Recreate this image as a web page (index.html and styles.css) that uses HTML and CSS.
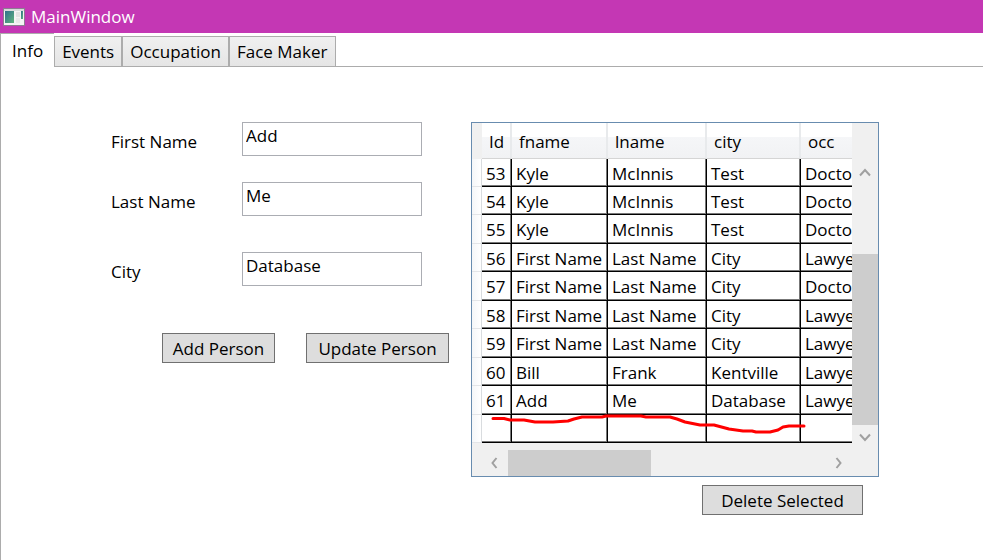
FILE: index.html
```
<!DOCTYPE html>
<html lang="en">
<head>
    <meta charset="UTF-8">
    <meta name="viewport" content="width=device-width, initial-scale=1.0">
    <title>MainWindow</title>
    <link rel="stylesheet" href="styles.css">
</head>
<body>
    <header class="titlebar">
        <svg class="app-icon" width="22" height="18" viewBox="0 0 22 18">
            <defs>
                <linearGradient id="pane" x1="0" y1="0" x2="1" y2="1">
                    <stop offset="0" stop-color="#2f6f8e"/>
                    <stop offset="1" stop-color="#5fb57c"/>
                </linearGradient>
            </defs>
            <rect x="0.5" y="0.5" width="21" height="17" fill="#f4f4f4" stroke="#8d7c93"/>
            <rect x="1" y="1" width="20" height="2" fill="#d8dadb"/>
            <rect x="2" y="3" width="9" height="12" fill="url(#pane)"/>
            <rect x="13" y="4" width="4" height="5" fill="#e2e2e2"/>
            <rect x="13" y="10" width="4" height="5" fill="#e9e9e9"/>
            <rect x="18" y="3" width="2" height="8" fill="url(#pane)"/>
        </svg>
        <span>MainWindow</span>
    </header>

    <nav class="tabs" role="tablist">
        <button class="tab active" role="tab" aria-selected="true">Info</button>
        <button class="tab" role="tab">Events</button>
        <button class="tab" role="tab">Occupation</button>
        <button class="tab" role="tab">Face Maker</button>
    </nav>

    <main class="page">
        <form class="person-form">
            <div class="field">
                <label for="fname">First Name</label>
                <input id="fname" type="text" value="Add">
            </div>
            <div class="field">
                <label for="lname">Last Name</label>
                <input id="lname" type="text" value="Me">
            </div>
            <div class="field field-city">
                <label for="city">City</label>
                <input id="city" type="text" value="Database">
            </div>
            <div class="form-buttons">
                <button type="button" class="btn btn-add">Add Person</button>
                <button type="button" class="btn btn-update">Update Person</button>
            </div>
        </form>

        <section class="people">
            <div class="grid">
                <div class="grid-rows">
                    <table>
                        <colgroup>
                            <col class="col-head">
                            <col class="col-id">
                            <col class="col-fname">
                            <col class="col-lname">
                            <col class="col-city">
                            <col>
                        </colgroup>
                        <thead>
                            <tr><td class="corner"></td><th>Id</th><th>fname</th><th>lname</th><th>city</th><th>occ</th></tr>
                        </thead>
                        <tbody>
                            <tr><td class="row-head"></td><td>53</td><td>Kyle</td><td>McInnis</td><td>Test</td><td>Doctor</td></tr>
                            <tr><td class="row-head"></td><td>54</td><td>Kyle</td><td>McInnis</td><td>Test</td><td>Doctor</td></tr>
                            <tr><td class="row-head"></td><td>55</td><td>Kyle</td><td>McInnis</td><td>Test</td><td>Doctor</td></tr>
                            <tr><td class="row-head"></td><td>56</td><td>First Name</td><td>Last Name</td><td>City</td><td>Lawyer</td></tr>
                            <tr><td class="row-head"></td><td>57</td><td>First Name</td><td>Last Name</td><td>City</td><td>Doctor</td></tr>
                            <tr><td class="row-head"></td><td>58</td><td>First Name</td><td>Last Name</td><td>City</td><td>Lawyer</td></tr>
                            <tr><td class="row-head"></td><td>59</td><td>First Name</td><td>Last Name</td><td>City</td><td>Lawyer</td></tr>
                            <tr><td class="row-head"></td><td>60</td><td>Bill</td><td>Frank</td><td>Kentville</td><td>Lawyer</td></tr>
                            <tr><td class="row-head"></td><td>61</td><td>Add</td><td>Me</td><td>Database</td><td>Lawyer</td></tr>
                            <tr><td class="row-head"></td><td></td><td></td><td></td><td></td><td></td></tr>
                        </tbody>
                    </table>
                </div>
                <div class="scroll-y">
                    <svg width="12" height="10" viewBox="0 0 12 10"><path d="M1 8.5 6 3l5 5.5"/></svg>
                    <div class="thumb-y"></div>
                    <svg width="12" height="10" viewBox="0 0 12 10"><path d="M1 1.5 6 7l5-5.5"/></svg>
                </div>
                <div class="scroll-x">
                    <svg width="8" height="12" viewBox="0 0 8 12"><path d="M6.5 1 2.5 6l4 5"/></svg>
                    <div class="track-x"><div class="thumb-x"></div></div>
                    <svg width="8" height="12" viewBox="0 0 8 12"><path d="M1.5 1l4 5-4 5"/></svg>
                </div>
                <!-- red pen line under the new row -->
                <svg class="pen" width="320" height="24" viewBox="0 0 320 24">
                    <path d="M3 4.500h11l6 1.500h14l11 2h18l15-1 6-2 8-2h20l4-1h35l5 1h24l7 2 8 3 15 3h14l15 4 14 2h9l4 1h14l8-2 5-3 6-1h15"/>
                </svg>
            </div>
            <button type="button" class="btn btn-delete">Delete Selected</button>
        </section>
    </main>
</body>
</html>
```

FILE: styles.css
```
* {
    box-sizing: border-box;
}

body {
    margin: 0;
    min-height: 100vh;
    display: flex;
    flex-direction: column;
    background: #fff;
    color: #000;
    font: 17px/24px "Open Sans", "Noto Sans", sans-serif;
}

button, input {
    font: inherit;
    color: inherit;
}

.titlebar {
    display: flex;
    align-items: center;
    gap: 6px;
    height: 33px;
    padding-left: 3px;
    background: #c437b4;
    color: #fff;
}

/* tabs */
.tabs {
    display: flex;
    align-items: flex-end;
    height: 34px;
    border-bottom: 1px solid #acacac;
}

.tab {
    height: 30px;
    padding: 0 7px;
    border: 1px solid #acacac;
    border-bottom: 0;
    border-left-width: 1px;
    background: linear-gradient(#f0f0f0, #e5e5e5);
    white-space: nowrap;
}

.tab.active {
    height: 34px;
    margin-bottom: -1px;
    padding: 0 11px;
    border-right: 0;
    background: #fff;
}

.page {
    flex: 1;
    display: flex;
    align-items: flex-start;
    gap: 22px;
    padding: 55px 104px 40px 110px;
    border-left: 1px solid #acacac;
}

/* form */
.person-form {
    flex: none;
    width: 338px;
}

.field {
    display: flex;
    align-items: flex-end;
    height: 34px;
    margin-bottom: 26px;
}

.field-city {
    margin-top: 36px;
}

.field label {
    width: 131px;
    line-height: 28px;
}

.field input {
    width: 180px;
    height: 34px;
    padding: 0 3px 8px;
    border: 1px solid #abadb3;
    background: #fff;
}

.form-buttons {
    display: flex;
    justify-content: flex-end;
    gap: 31px;
    margin-top: 47px;
}

.btn {
    height: 30px;
    padding: 2px 0 0;
    border: 1px solid #707070;
    background: #ddd;
}

.btn-add { width: 113px; }
.btn-update { width: 143px; }

.btn-delete {
    width: 161px;
    margin: 8px 16px 0 0;
}

/* data grid */
.people {
    flex: 1;
    min-width: 0;
    display: flex;
    flex-direction: column;
    align-items: flex-end;
}

.grid {
    position: relative;
    width: 100%;
    display: grid;
    grid-template-columns: 1fr 26px;
    border: 1px solid #688caf;
    background: #f0f0f0;
}

.grid-rows {
    overflow: hidden;
}

table {
    width: 100%;
    table-layout: fixed;
    border-collapse: separate;
    border-spacing: 0;
}

.col-head { width: 10px; }
.col-id { width: 30px; }
.col-fname { width: 96px; }
.col-lname { width: 99px; }
.col-city { width: 94px; }

th, td {
    padding: 0;
    overflow: hidden;
    white-space: nowrap;
    text-align: left;
}

th {
    height: 36px;
    padding: 2px 0 0 7px;
    border-right: 2px solid #e8eaec;
    border-bottom: 1px solid #d5d5d5;
    background: linear-gradient(#fff 40%, #f5f6f8 41%, #f1f2f4);
    font-weight: normal;
}

/* soft edge inside each black grid line */
td {
    height: 28px;
    padding: 2px 0 0 4px;
    border-right: 1px solid #000;
    border-bottom: 1px solid #000;
    box-shadow: inset -1px -1px #777;
    background: #fff;
}

tbody tr:nth-child(2n+3) td {
    height: 29px;
}

th:last-child {
    border-right: 0;
}

td:last-child {
    border-right: 0;
    box-shadow: inset 0 -1px #777;
}

td.corner, td.row-head {
    padding: 0;
    border-right: 1px solid #d9dcdf;
    border-bottom: 1px solid #e3e5e8;
    box-shadow: none;
    background: linear-gradient(to right, #f4f6f8, #fff);
}

td.corner {
    border: 0;
    background: #f0f0f0;
}

/* scrollbars */
.scroll-y {
    display: flex;
    flex-direction: column;
    align-items: center;
    justify-content: space-between;
    padding: 44px 0 0;
}

.thumb-y {
    width: 26px;
    height: 171px;
    margin: auto 0 8px;
    background: #cdcdcd;
}

.scroll-x {
    display: flex;
    align-items: center;
    height: 26px;
    margin-top: 7px;
    padding: 0 9px 0 18px;
}

.track-x {
    flex: 1;
    margin: 0 10px;
}

.thumb-x {
    width: 45%;
    height: 26px;
    background: #cdcdcd;
}

.scroll-x svg, .scroll-y svg {
    flex: none;
    fill: none;
    stroke: #a0a0a0;
    stroke-width: 2;
}

.pen {
    position: absolute;
    left: 18px;
    top: 291px;
    fill: none;
    stroke: #f00;
    stroke-width: 3;
    stroke-linecap: round;
    stroke-linejoin: round;
}
```
